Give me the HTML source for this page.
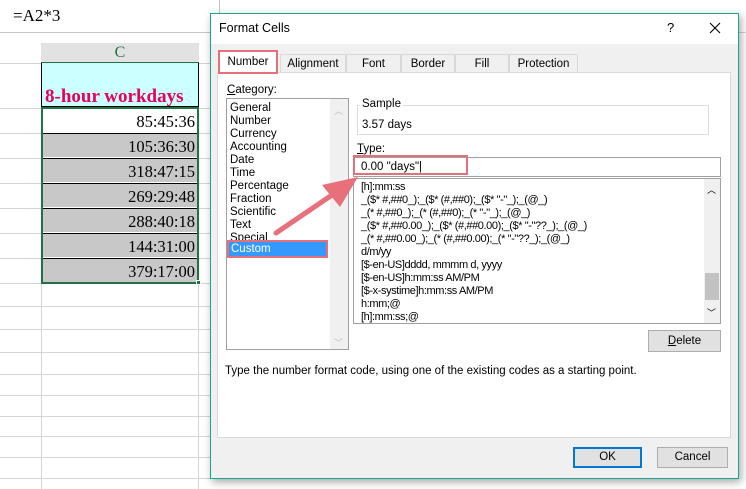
<!DOCTYPE html>
<html><head><style>
*{margin:0;padding:0;box-sizing:border-box}
body{width:746px;height:489px;position:relative;overflow:hidden;background:#fff;font-family:"Liberation Sans",sans-serif;font-size:11.5px;color:#000}
.a{position:absolute}
.hl{position:absolute;left:0;width:210px;height:1px;background:#d4d4d4}
.cell{position:absolute;left:43px;width:154px;height:24px;background:#c8c8c8;border-top:1px solid #000;font-family:"Liberation Serif",serif;font-size:16.5px;text-align:right;padding-right:2px;line-height:25px}
.cat{position:absolute;left:230px;font-size:11.5px;line-height:13px}
.fm{position:absolute;left:361px;font-size:11px;line-height:13px;white-space:nowrap;letter-spacing:-0.4px}
.tab{position:absolute;top:54px;height:19px;border:1px solid #d9d9d9;border-bottom:none;background:#f0f0f0;text-align:center;line-height:18px;font-size:11.5px}
.btn{position:absolute;background:#e1e1e1;border:1px solid #adadad;text-align:center;font-size:11.5px}
</style></head><body>
<div class="a" style="left:0;top:0;width:746px;height:33px;background:#fff;border-bottom:1px solid #d4d4d4"></div>
<div class="a" style="left:0;top:0;width:220px;height:33px;border:1px solid #c6c6c6;border-left:none;border-top:none"></div>
<div class="a" style="left:13px;top:6px;font-family:'Liberation Serif',serif;font-size:17px">=A2*3</div>
<div class="hl" style="top:63px"></div>
<div class="hl" style="top:108px"></div><div class="hl" style="top:133px"></div><div class="hl" style="top:158px"></div><div class="hl" style="top:183px"></div><div class="hl" style="top:208px"></div><div class="hl" style="top:233px"></div><div class="hl" style="top:258px"></div><div class="hl" style="top:283px"></div><div class="hl" style="top:306px"></div><div class="hl" style="top:329px"></div><div class="hl" style="top:352px"></div><div class="hl" style="top:374px"></div><div class="hl" style="top:395px"></div><div class="hl" style="top:416px"></div><div class="hl" style="top:436px"></div><div class="hl" style="top:457px"></div><div class="hl" style="top:478px"></div>
<div class="a" style="left:41px;top:43px;width:1px;height:446px;background:#d4d4d4"></div>
<div class="a" style="left:198px;top:43px;width:1px;height:446px;background:#d4d4d4"></div>
<div class="a" style="left:41px;top:43px;width:158px;height:20px;background:#e2e2e2;border-bottom:1px solid #217346;text-align:center;color:#217346;font-family:'Liberation Serif',serif;font-size:16px;line-height:20px">C</div>
<div class="a" style="left:41px;top:63px;width:158px;height:44px;background:#ccffff;border:1px solid #000;border-top:none"></div>
<div class="a" style="left:45px;top:86px;font-family:'Liberation Serif',serif;font-weight:bold;font-size:19px;color:#e8005a;white-space:nowrap">8-hour workdays</div>
<div class="a" style="left:41px;top:107px;width:158px;height:177px;border:2px solid #217346;background:#fff"></div>
<div class="a" style="left:43px;top:109px;width:154px;height:24px;font-family:'Liberation Serif',serif;font-size:16.5px;text-align:right;padding-right:2px;line-height:26px">85:45:36</div>
<div class="cell" style="top:133px">105:36:30</div>
<div class="cell" style="top:158px">318:47:15</div>
<div class="cell" style="top:183px">269:29:48</div>
<div class="cell" style="top:208px">288:40:18</div>
<div class="cell" style="top:233px">144:31:00</div>
<div class="cell" style="top:258px">379:17:00</div>
<div class="a" style="left:196px;top:280px;width:5px;height:5px;background:#217346;border:1px solid #fff"></div>
<div class="a" style="left:210px;top:13px;width:529px;height:466px;background:#f0f0f0;border:1px solid #1aa68f;box-shadow:2px 3px 8px rgba(0,0,0,.35)"></div>
<div class="a" style="left:211px;top:14px;width:527px;height:30px;background:#fff"></div>
<div class="a" style="left:219px;top:21px;font-size:12.5px">Format Cells</div>
<div class="a" style="left:667px;top:20px;font-size:13px">?</div>
<svg class="a" style="left:709px;top:22px" width="12" height="12"><path d="M1 1L11 11M11 1L1 11" stroke="#000" stroke-width="1.1"/></svg>
<div class="tab" style="left:280px;width:66px">Alignment</div>
<div class="tab" style="left:346px;width:55px">Font</div>
<div class="tab" style="left:401px;width:54px">Border</div>
<div class="tab" style="left:455px;width:54px">Fill</div>
<div class="tab" style="left:509px;width:69px">Protection</div>
<div class="a" style="left:217px;top:72px;width:514px;height:366px;background:#fff;border:1px solid #d9d9d9"></div>
<div class="a" style="left:218px;top:50px;width:60px;height:24px;background:#fff;border:2px solid #e3707a;text-align:center;line-height:21px">Number</div>
<div class="a" style="left:227px;top:84px"><u>C</u>ategory:</div>
<div class="a" style="left:226px;top:98px;width:123px;height:252px;border:1px solid #a0a0a0;background:#fff"></div>
<div class="a" style="left:330px;top:99px;width:18px;height:250px;background:#f0f0f0"></div>
<div class="a" style="left:334px;top:104px;color:#bbb;font-size:9px">︿</div>
<div class="a" style="left:334px;top:336px;color:#bbb;font-size:9px">﹀</div>
<div class="cat" style="top:102px">General</div>
<div class="cat" style="top:115px">Number</div>
<div class="cat" style="top:128px">Currency</div>
<div class="cat" style="top:141px">Accounting</div>
<div class="cat" style="top:154px">Date</div>
<div class="cat" style="top:167px">Time</div>
<div class="cat" style="top:180px">Percentage</div>
<div class="cat" style="top:193px">Fraction</div>
<div class="cat" style="top:206px">Scientific</div>
<div class="cat" style="top:219px">Text</div>
<div class="cat" style="top:232px">Special</div>
<div class="a" style="left:227px;top:240px;width:101px;height:18px;background:#3399ff;border:2px solid #e3707a;color:#fff;padding-left:2px;line-height:15px">Custom</div>
<div class="a" style="left:357px;top:105px;width:352px;height:30px;border:1px solid #dcdcdc"></div>
<div class="a" style="left:360px;top:98px;background:#fff;padding:0 2px">Sample</div>
<div class="a" style="left:362px;top:119px">3.57 days</div>
<div class="a" style="left:357px;top:143px"><u>T</u>ype:</div>
<div class="a" style="left:353px;top:157px;width:368px;height:20px;border:1px solid #a0a0a0;background:#fff"></div>
<div class="a" style="left:353px;top:155px;width:115px;height:20px;border:2px solid #e3707a"></div>
<div class="a" style="left:361px;top:161px">0.00 "days"|</div>
<div class="a" style="left:353px;top:178px;width:368px;height:146px;border:1px solid #a0a0a0;background:#fff"></div>
<div class="a" style="left:704px;top:179px;width:16px;height:144px;background:#f0f0f0"></div>
<div class="a" style="left:705px;top:273px;width:14px;height:27px;background:#c2c2c2"></div>
<div class="a" style="left:707px;top:183px;font-size:9px">︿</div>
<div class="a" style="left:707px;top:306px;font-size:9px">﹀</div>
<div class="fm" style="top:181px">[h]:mm:ss</div>
<div class="fm" style="top:194px">_($* #,##0_);_($* (#,##0);_($* "-"_);_(@_)</div>
<div class="fm" style="top:207px">_(* #,##0_);_(* (#,##0);_(* "-"_);_(@_)</div>
<div class="fm" style="top:220px">_($* #,##0.00_);_($* (#,##0.00);_($* "-"??_);_(@_)</div>
<div class="fm" style="top:233px">_(* #,##0.00_);_(* (#,##0.00);_(* "-"??_);_(@_)</div>
<div class="fm" style="top:246px">d/m/yy</div>
<div class="fm" style="top:259px">[$-en-US]dddd, mmmm d, yyyy</div>
<div class="fm" style="top:272px">[$-en-US]h:mm:ss AM/PM</div>
<div class="fm" style="top:285px">[$-x-systime]h:mm:ss AM/PM</div>
<div class="fm" style="top:298px">h:mm;@</div>
<div class="fm" style="top:311px">[h]:mm:ss;@</div>
<svg class="a" style="left:270px;top:165px" width="100" height="75"><path d="M6 68L62 30" stroke="#e8707a" stroke-width="5" stroke-linecap="round"/><path d="M88 12L52 20L70 42Z" fill="#e8707a"/></svg>
<div class="btn" style="left:648px;top:330px;width:73px;height:22px;line-height:20px"><u>D</u>elete</div>
<div class="a" style="left:225px;top:365px">Type the number format code, using one of the existing codes as a starting point.</div>
<div class="btn" style="left:573px;top:447px;width:69px;height:21px;line-height:17px;border:2px solid #0078d7">OK</div>
<div class="btn" style="left:657px;top:447px;width:71px;height:21px;line-height:19px">Cancel</div>
</body></html>
